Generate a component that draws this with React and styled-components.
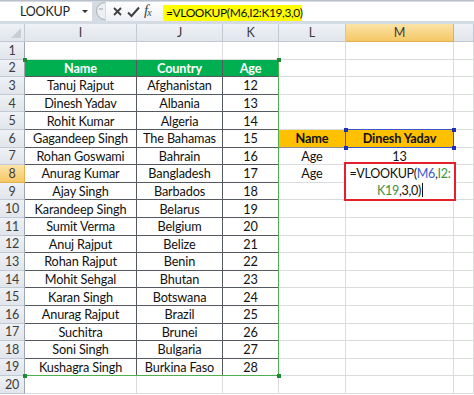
import React from "react";
import styled, { createGlobalStyle, css } from "styled-components";

const GlobalStyle = createGlobalStyle`
    html, body {
        margin: 0;
        padding: 0;
        background: #ffffff;
        overflow: hidden;
    }
    body {
        font-family: "Lato", "Open Sans", sans-serif;
    }
`;

const COL_WIDTHS = "25px 112px 86px 56px 67px 108px 1fr";
const ROW_H = 17.6;

const names = [
    "Tanuj Rajput", "Dinesh Yadav", "Rohit Kumar", "Gagandeep Singh",
    "Rohan Goswami", "Anurag Kumar", "Ajay Singh", "Karandeep Singh",
    "Sumit Verma", "Anuj Rajput", "Rohan Rajput", "Mohit Sehgal",
    "Karan Singh", "Anurag Rajput", "Suchitra", "Soni Singh", "Kushagra Singh",
];

const countries = [
    "Afghanistan", "Albania", "Algeria", "The Bahamas", "Bahrain",
    "Bangladesh", "Barbados", "Belarus", "Belgium", "Belize", "Benin",
    "Bhutan", "Botswana", "Brazil", "Brunei", "Bulgaria", "Burkina Faso",
];

const StyledSheet = styled.div`
    width: 474px;
    height: 395px;
    overflow: hidden;
    display: flex;
    flex-direction: column;
`;

/* formula bar */

const StyledFormulaBar = styled.div`
    height: 24px;
    flex: none;
    display: flex;
    align-items: flex-start;
    background: #d5dbe3;
    border-top: 1px solid #b9c0ca;
    box-sizing: border-box;
`;

const StyledNameBox = styled.div`
    width: 92px;
    height: 19px;
    margin-top: 1px;
    background: #ffffff;
    display: flex;
    align-items: center;
    justify-content: space-between;
    padding: 0 4px 0 20px;
    box-sizing: border-box;
    font-size: 12.5px;
    letter-spacing: -0.2px;
    color: #222;
`;

const StyledCaret = styled.span`
    width: 0;
    height: 0;
    border-left: 3px solid transparent;
    border-right: 3px solid transparent;
    border-top: 3px solid #333;
`;

const StyledToolArea = styled.div`
    width: 57px;
    height: 19px;
    margin-top: 1px;
    background: linear-gradient(#ffffff, #eef1f5);
    display: flex;
    align-items: center;
    gap: 4px;
    padding-left: 6px;
    box-sizing: border-box;
`;

const StyledFx = styled.span`
    font-family: "Liberation Serif", serif;
    font-style: italic;
    font-size: 15px;
    line-height: 15px;
    color: #444;

    sub {
        font-size: 10px;
        vertical-align: -1px;
        margin-left: -1px;
    }
`;

const StyledFormulaInput = styled.div`
    flex: 1;
    height: 19px;
    margin-top: 1px;
    background: #ffffff;
    display: flex;
    align-items: flex-end;
`;

const StyledFormulaText = styled.div`
    width: 139px;
    height: 16px;
    background: #ffff00;
    font-size: 12px;
    letter-spacing: -0.4px;
    line-height: 16px;
    padding-left: 3px;
    box-sizing: border-box;
    color: #111;
    white-space: nowrap;
`;

/* grid */

const StyledGrid = styled.div`
    flex: 1;
    display: grid;
    grid-template-columns: ${COL_WIDTHS};
    grid-template-rows: 18px repeat(20, ${ROW_H}px);
    font-size: 12.7px;
    letter-spacing: -0.15px;
    color: #111;
`;

const headerBase = css`
    background: ${(p) =>
        p.$active
            ? "linear-gradient(#fbe3a8, #f5c865)"
            : "linear-gradient(#eef1f5, #e1e6ec)"};
    color: #3c3c3c;
    border-right: 1px solid ${(p) => (p.$active ? "#e4b14f" : "#c3c9d2")};
    border-bottom: 1px solid ${(p) => (p.$active ? "#e4b14f" : "#c3c9d2")};
    box-sizing: border-box;
    display: flex;
    align-items: center;
    justify-content: center;
    font-size: 12.5px;
`;

const StyledColHead = styled.div`
    ${headerBase}
    grid-row: 1;
    grid-column: ${(p) => p.$col};
`;

const StyledRowHead = styled.div`
    ${headerBase}
    grid-row: ${(p) => p.$row};
    grid-column: 1;
    border-right-color: ${(p) => (p.$active ? "#e4b14f" : "#9da6b1")};
`;

const StyledCorner = styled.div`
    ${headerBase}
    grid-row: 1;
    grid-column: 1;
    position: relative;

    &::after {
        content: "";
        position: absolute;
        right: 3px;
        bottom: 3px;
        border-left: 10px solid transparent;
        border-bottom: 10px solid #c9ced6;
    }
`;

const cellBorder = {
    plain: "#dadcdf",
    table: "#555a60",
    orange: "#8d8d8d",
};

const cellBg = {
    plain: "#ffffff",
    table: "#ffffff",
    head: "#00b050",
    orange: "#ffc000",
};

const StyledCell = styled.div`
    grid-row: ${(p) => p.$row};
    grid-column: ${(p) => p.$col};
    background: ${(p) => cellBg[p.$kind]};
    color: ${(p) => (p.$kind === "head" ? "#ffffff" : "#111111")};
    font-weight: ${(p) => (p.$kind === "head" || p.$kind === "orange" ? 700 : 400)};
    border-right: 1px solid ${(p) => cellBorder[p.$kind === "head" ? "table" : p.$kind]};
    border-bottom: 1px solid ${(p) => cellBorder[p.$kind === "head" ? "table" : p.$kind]};
    box-sizing: border-box;
    display: flex;
    align-items: center;
    justify-content: center;
    white-space: nowrap;
    overflow: hidden;
`;

/* reference highlights drawn over the cells */

const StyledRange = styled.div`
    grid-row: ${(p) => p.$rows};
    grid-column: ${(p) => p.$cols};
    position: relative;
    pointer-events: none;
    box-sizing: border-box;
    border-right: 1px solid ${(p) => p.$color};
    border-bottom: 1px solid ${(p) => p.$color};
    ${(p) =>
        p.$full &&
        css`
            border: 1px solid ${p.$color};
            margin: -1px 0 0 -1px;
        `}
`;

const StyledHandle = styled.span`
    position: absolute;
    width: 4px;
    height: 4px;
    background: ${(p) => p.$color};
    ${(p) => (p.$top ? "top: -2px;" : "bottom: -3px;")}
    ${(p) => (p.$left ? "left: -2px;" : "right: -3px;")}
`;

const StyledEditBox = styled.div`
    grid-row: 9 / 11;
    grid-column: 6;
    margin: -3px -2px -1px -2px;
    border: 2px solid #e3202b;
    background: #ffffff;
    box-sizing: border-box;
    display: flex;
    flex-direction: column;
    align-items: center;
    justify-content: center;
    font-size: 12.5px;
    letter-spacing: -0.3px;
    line-height: 17px;
    color: #111;
    white-space: nowrap;
`;

const StyledRef = styled.span`
    color: ${(p) => p.$color};
`;

const StyledCursor = styled.span`
    display: inline-block;
    width: 1px;
    height: 14px;
    margin-left: 1px;
    background: #111;
    vertical-align: -2px;
`;

const Handles = ({ color }) => (
    <>
        <StyledHandle $color={color} $top $left />
        <StyledHandle $color={color} $top />
        <StyledHandle $color={color} $left />
        <StyledHandle $color={color} />
    </>
);

const CloseIcon = () => (
    <svg width="11" height="11" viewBox="0 0 11 11">
        <path d="M2 2 L9 9 M9 2 L2 9" stroke="#3f3f3f" strokeWidth="1.8" />
    </svg>
);

const CheckIcon = () => (
    <svg width="13" height="12" viewBox="0 0 13 12">
        <path d="M1 6.5 L4.5 10 L12 1.5" stroke="#3f3f3f" strokeWidth="2" fill="none" />
    </svg>
);

const Splitter = () => (
    <svg width="14" height="20" viewBox="0 0 14 20">
        <path d="M13 1.5 A8.5 8.5 0 0 0 13 18.5" fill="#eceff3" stroke="#aab1bb" />
        <path d="M7 8 h4" stroke="#9ba3ad" strokeWidth="1" />
    </svg>
);

const COL_LETTERS = ["I", "J", "K", "L", "M", ""];

const cellKind = (r, c) => {
    if (r === 2 && c <= 4) return "head";
    if (r >= 3 && r <= 19 && c <= 4) return "table";
    if (r === 6 && (c === 5 || c === 6)) return "orange";
    return "plain";
};

const cellText = (r, c) => {
    if (r === 2) return ["Name", "Country", "Age"][c - 2];
    if (r >= 3 && r <= 19) {
        if (c === 2) return names[r - 3];
        if (c === 3) return countries[r - 3];
        if (c === 4) return r + 9;
    }
    if (r === 6 && c === 5) return "Name";
    if (r === 6 && c === 6) return "Dinesh Yadav";
    if ((r === 7 || r === 8) && c === 5) return "Age";
    if (r === 7 && c === 6) return "13";
    return "";
};

const App = () => {
    const rows = Array.from({ length: 20 }, (_, i) => i + 1);
    const cols = [2, 3, 4, 5, 6, 7];

    return (
        <StyledSheet>
            <GlobalStyle />
            <StyledFormulaBar>
                <StyledNameBox>
                    LOOKUP
                    <StyledCaret />
                </StyledNameBox>
                <Splitter />
                <StyledToolArea>
                    <CloseIcon />
                    <CheckIcon />
                    <StyledFx>
                        f<sub>x</sub>
                    </StyledFx>
                </StyledToolArea>
                <StyledFormulaInput>
                    <StyledFormulaText>=VLOOKUP(M6,I2:K19,3,0)</StyledFormulaText>
                </StyledFormulaInput>
            </StyledFormulaBar>

            <StyledGrid>
                <StyledCorner />
                {COL_LETTERS.map((letter, i) => (
                    <StyledColHead key={i} $col={i + 2} $active={letter === "M"}>
                        {letter}
                    </StyledColHead>
                ))}
                {rows.map((r) => (
                    <React.Fragment key={r}>
                        <StyledRowHead $row={r + 1} $active={r === 8}>
                            {r}
                        </StyledRowHead>
                        {cols.map((c) => (
                            <StyledCell
                                key={c}
                                $row={r + 1}
                                $col={c}
                                $kind={cellKind(r, c)}
                            >
                                {cellText(r, c)}
                            </StyledCell>
                        ))}
                    </React.Fragment>
                ))}

                <StyledRange $rows="3 / 21" $cols="2 / 5" $color="#4fae4f">
                    <Handles color="#1f8a35" />
                </StyledRange>
                <StyledRange $rows="7" $cols="6" $color="#3a56c8" $full>
                    <Handles color="#1f2fb8" />
                </StyledRange>

                <StyledEditBox>
                    <div>
                        =VLOOKUP(<StyledRef $color="#3b5ccc">M6</StyledRef>,
                        <StyledRef $color="#3f8f45">I2:</StyledRef>
                    </div>
                    <div>
                        <StyledRef $color="#3f8f45">K19</StyledRef>,3,0)
                        <StyledCursor />
                    </div>
                </StyledEditBox>
            </StyledGrid>
        </StyledSheet>
    );
};

export default App;
